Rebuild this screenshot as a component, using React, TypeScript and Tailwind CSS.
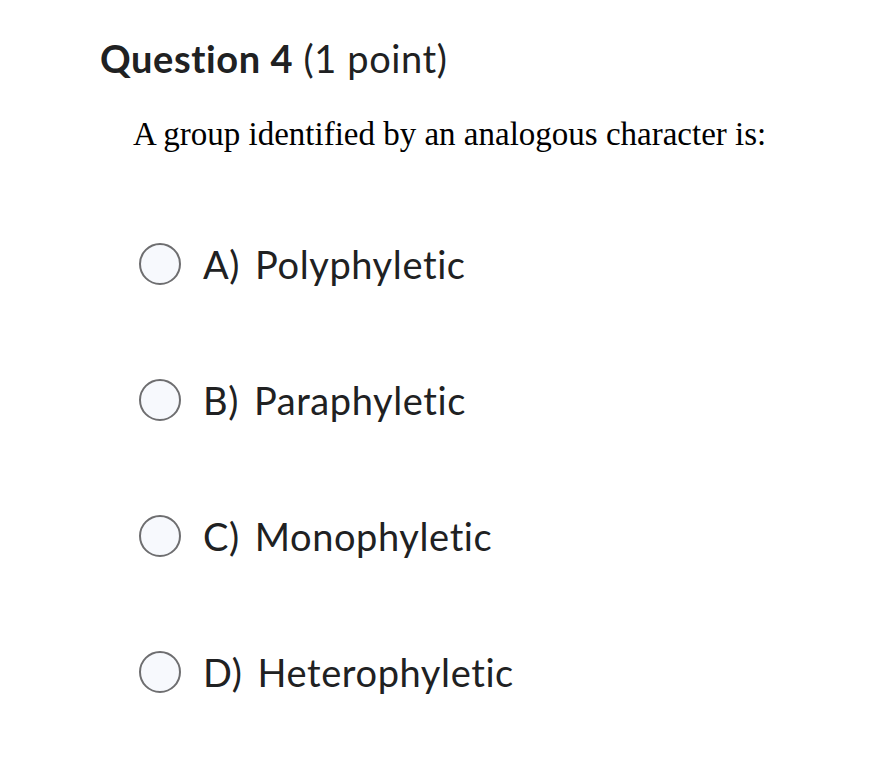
export default function App() {
  const options = [
    ['A)', 'Polyphyletic'],
    ['B)', 'Paraphyletic'],
    ['C)', 'Monophyletic'],
    ['D)', 'Heterophyletic'],
  ];

  return (
    <div className="min-h-screen w-[879px] bg-white pl-[100px] pt-[34px] text-[#202122]">
      <h2 className="text-[38px] leading-[48px] tracking-[0.6px] font-['Lato',sans-serif]">
        <span className="font-bold">Question 4</span> <span>(1 point)</span>
      </h2>
      <p className="mt-[32px] pl-[33px] font-['Liberation_Serif',serif] text-[33px] leading-[40px] text-black">
        A group identified by an analogous character is:
      </p>
      <div className="mt-[88px] flex flex-col gap-[92px] pl-[39px]">
        {options.map(([letter, word]) => (
          <label key={letter} className="flex h-[44px] items-center gap-[22px]">
            <span className="h-[42px] w-[42px] shrink-0 rounded-full border-2 border-[#6e6e70] bg-[#f7f9fd]" />
            <span className="flex gap-[15px] font-['Lato',sans-serif] text-[38px] leading-[44px] tracking-[0.6px]">
              <span>{letter}</span>
              <span>{word}</span>
            </span>
          </label>
        ))}
      </div>
    </div>
  );
}
